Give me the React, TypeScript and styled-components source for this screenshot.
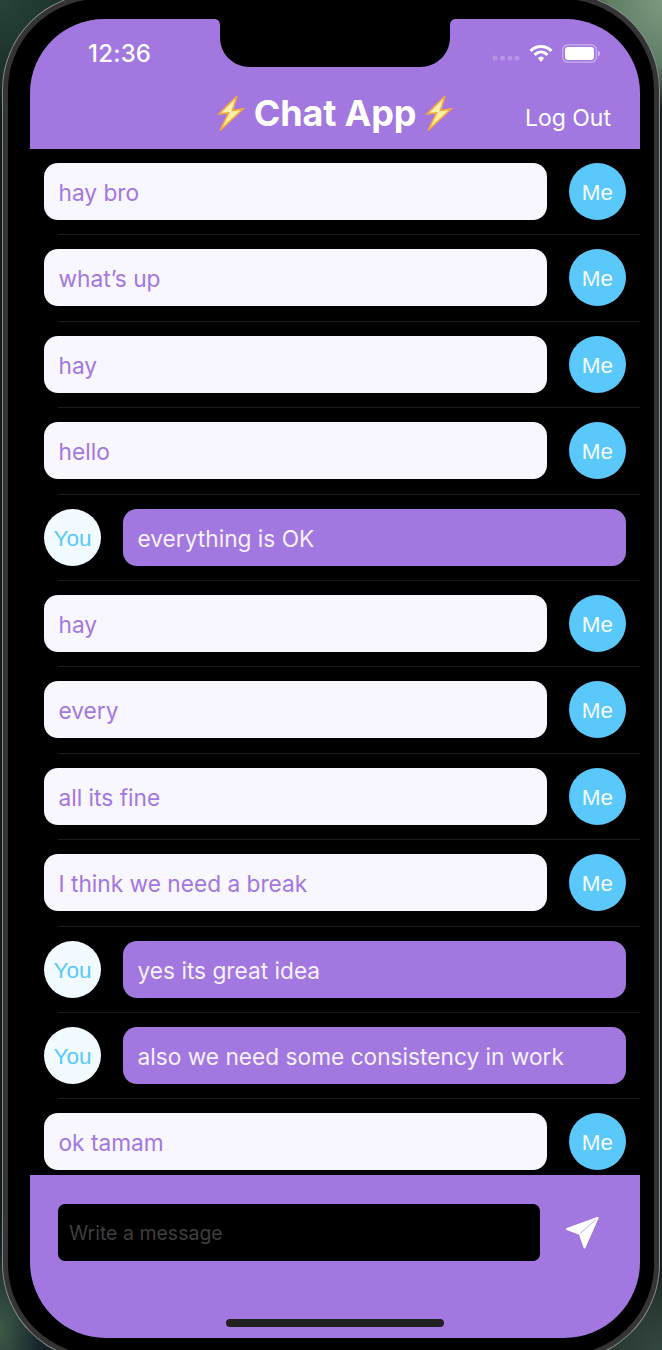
import React from "react";
import styled, { createGlobalStyle } from "styled-components";

const Global = createGlobalStyle`
  html, body { margin: 0; padding: 0; background: #10201c; }
  * { box-sizing: border-box; }
`;

const Page = styled.div`
  width: 662px;
  height: 1350px;
  overflow: hidden;
  font-family: Inter, "Liberation Sans", sans-serif;
  background:
    radial-gradient(ellipse 60px 120px at 0px 1330px, #3d5a48 0%, #16232a 70%, transparent 100%),
    radial-gradient(ellipse 90px 110px at 662px 0px, #7d9a80 0%, #5d7c64 60%, transparent 100%),
    radial-gradient(ellipse 110px 110px at 0px 0px, #27433a 0%, #1a3029 70%, transparent 100%),
    radial-gradient(ellipse 90px 80px at 662px 1350px, #33463f 0%, #26362f 70%, transparent 100%),
    #121c1d;
`;

const Bezel = styled.div`
  width: 656px;
  height: 1366px;
  margin: -6px 3px 0;
  padding: 20px 22px 0;
  background: #000;
  border: 5px solid #343434;
  border-radius: 96px;
  box-shadow: 0 0 0 1px #8a8a8a;
`;

const Screen = styled.div`
  position: relative;
  width: 610px;
  height: 1319px;
  display: flex;
  flex-direction: column;
  background: #000;
  border-radius: 74px 74px 76px 76px;
  overflow: hidden;
`;

const Notch = styled.svg`
  position: absolute;
  top: 0;
  left: 184px;
`;

const Header = styled.header`
  height: 130px;
  flex: none;
  background: #a277e0;
  color: #fff;
  display: flex;
  flex-direction: column;
`;

const StatusBar = styled.div`
  height: 70px;
  padding: 20px 40px 0 58px;
  display: flex;
  align-items: flex-start;
  justify-content: space-between;
`;

const Clock = styled.span`
  font-size: 24px;
  line-height: 30px;
  font-weight: 500;
  letter-spacing: 0.2px;
`;

const StatusIcons = styled.div`
  display: flex;
  align-items: center;
  gap: 9px;
  padding-top: 5px;
`;

const TitleRow = styled.div`
  height: 48px;
  display: grid;
  grid-template-columns: 1fr auto 1fr;
  align-items: center;
`;

const Title = styled.h1`
  grid-column: 2;
  margin: 0;
  display: flex;
  align-items: center;
  gap: 9px;
  font-size: 36px;
  line-height: 48px;
  font-weight: 700;
  letter-spacing: -0.2px;
`;

const LogOut = styled.span`
  justify-self: end;
  margin-right: 29px;
  padding-top: 9px;
  font-size: 23px;
  line-height: 30px;
  font-weight: 400;
`;

const List = styled.main`
  flex: 1;
  min-height: 0;
  overflow: hidden;
  background: #000;
`;

const Row = styled.div<{ $mine: boolean }>`
  position: relative;
  height: 86.4px;
  padding: 14px;
  display: grid;
  grid-template-columns: ${(p) => (p.$mine ? "1fr 57px" : "57px 1fr")};
  column-gap: 22px;
  &::after {
    content: "";
    position: absolute;
    left: 28px;
    right: 0;
    bottom: 0;
    height: 1px;
    background: #1b1b1d;
  }
`;

const Bubble = styled.div<{ $mine: boolean }>`
  height: 57px;
  padding: 2px 14.5px 0;
  display: flex;
  align-items: center;
  border-radius: 14px;
  font-size: 22.7px;
  background: ${(p) => (p.$mine ? "#f8f6fe" : "#a277e0")};
  color: ${(p) => (p.$mine ? "#a277e0" : "#f6f1fd")};
`;

const Avatar = styled.div<{ $mine: boolean }>`
  width: 57px;
  height: 57px;
  padding-top: 3px;
  display: flex;
  align-items: center;
  justify-content: center;
  border-radius: 50%;
  font-family: "Liberation Sans", Arial, sans-serif;
  font-size: 22.5px;
  background: ${(p) => (p.$mine ? "#5ac8fa" : "#f0faff")};
  color: ${(p) => (p.$mine ? "#f3fbff" : "#5ac8fa")};
`;

const Footer = styled.footer`
  height: 163px;
  flex: none;
  background: #a277e0;
  padding: 29px 0 0 28px;
  display: flex;
  flex-direction: column;
`;

const Composer = styled.div`
  display: flex;
  align-items: center;
`;

const Input = styled.div`
  width: 482px;
  height: 57px;
  padding: 0 11px;
  display: flex;
  align-items: center;
  background: #000;
  border-radius: 7px;
  color: #3f3f3f;
  font-size: 19.5px;
`;

const SendButton = styled.button`
  margin-left: 24px;
  padding: 0;
  border: 0;
  background: none;
  display: flex;
`;

const HomeBar = styled.div`
  width: 218px;
  height: 8px;
  margin: 58px 0 0 168px;
  border-radius: 4px;
  background: #212121;
`;

const Bolt = () => (
  <svg width="28" height="38" viewBox="0 0 28 38">
    <defs>
      <linearGradient id="boltFill" x1="0" y1="0" x2="1" y2="1">
        <stop offset="0" stopColor="#fff8cc" />
        <stop offset="1" stopColor="#ffe68a" />
      </linearGradient>
    </defs>
    <path
      d="M20 2 L2 20 L11.5 19 L3 36.5 L26 15 L15.5 16.5 Z"
      fill="url(#boltFill)"
      stroke="#f3a73f"
      strokeWidth="1.7"
      strokeLinejoin="miter"
    />
  </svg>
);

type Msg = { text: string; mine: boolean };

const messages: Msg[] = [
  { text: "hay bro", mine: true },
  { text: "what’s up", mine: true },
  { text: "hay", mine: true },
  { text: "hello", mine: true },
  { text: "everything is OK", mine: false },
  { text: "hay", mine: true },
  { text: "every", mine: true },
  { text: "all its fine", mine: true },
  { text: "I think we need a break", mine: true },
  { text: "yes its great idea", mine: false },
  { text: "also we need some consistency in work", mine: false },
  { text: "ok tamam", mine: true },
];

export default function App() {
  return (
    <Page>
      <Global />
      <Bezel>
        <Screen>
          <Notch width="242" height="48" viewBox="0 0 242 48">
            <path
              d="M0 0 H242 C238 0 236 2 236 7 V18 C236 36 222 48 206 48 H36 C20 48 6 36 6 18 V7 C6 2 4 0 0 0 Z"
              fill="#000"
            />
          </Notch>
          <Header>
            <StatusBar>
              <Clock>12:36</Clock>
              <StatusIcons>
                <svg width="28" height="10" viewBox="0 0 28 10" style={{ marginTop: 8 }}>
                  {[3, 10.5, 18, 25].map((x) => (
                    <circle key={x} cx={x} cy="5" r="2.5" fill="#fff" opacity="0.22" />
                  ))}
                </svg>
                <svg width="24" height="19" viewBox="0 0 24 19">
                  <g fill="none" stroke="#fff" strokeWidth="3">
                    <path d="M1.5 6.8 C7.5 1 16.5 1 22.5 6.8" />
                    <path d="M5.5 10.8 C9.5 7 14.5 7 18.5 10.8" />
                  </g>
                  <path d="M8.8 14 C10.8 12 13.2 12 15.2 14 L12 18 Z" fill="#fff" />
                </svg>
                <svg width="38" height="19" viewBox="0 0 38 19">
                  <rect x="0.8" y="0.8" width="33.5" height="17.4" rx="5" fill="none" stroke="#fff" strokeOpacity="0.45" strokeWidth="1.2" />
                  <rect x="3" y="3" width="29" height="13" rx="3" fill="#fff" />
                  <path d="M36 6.5 C37.3 7 38 8 38 9.5 C38 11 37.3 12 36 12.5 Z" fill="#fff" fillOpacity="0.5" />
                </svg>
              </StatusIcons>
            </StatusBar>
            <TitleRow>
              <Title>
                <Bolt />
                Chat App
                <Bolt />
              </Title>
              <LogOut>Log Out</LogOut>
            </TitleRow>
          </Header>
          <List>
            {messages.map((m, i) => (
              <Row key={i} $mine={m.mine}>
                {!m.mine && <Avatar $mine={false}>You</Avatar>}
                <Bubble $mine={m.mine}>{m.text}</Bubble>
                {m.mine && <Avatar $mine>Me</Avatar>}
              </Row>
            ))}
          </List>
          <Footer>
            <Composer>
              <Input>Write a message</Input>
              <SendButton aria-label="Send">
                <svg width="36" height="36" viewBox="0 0 36 36">
                  <path d="M33.5 3 L3 14 L15 18.5 Z" fill="#fff" stroke="#fff" strokeWidth="2" strokeLinejoin="round" />
                  <path d="M33.5 3 L16 19.5 L20.5 32.5 Z" fill="#fff" stroke="#fff" strokeWidth="2" strokeLinejoin="round" />
                  <path d="M32 4.5 L15.5 19" stroke="#a277e0" strokeWidth="0.9" strokeOpacity="0.7" />
                </svg>
              </SendButton>
            </Composer>
            <HomeBar />
          </Footer>
        </Screen>
      </Bezel>
    </Page>
  );
}
